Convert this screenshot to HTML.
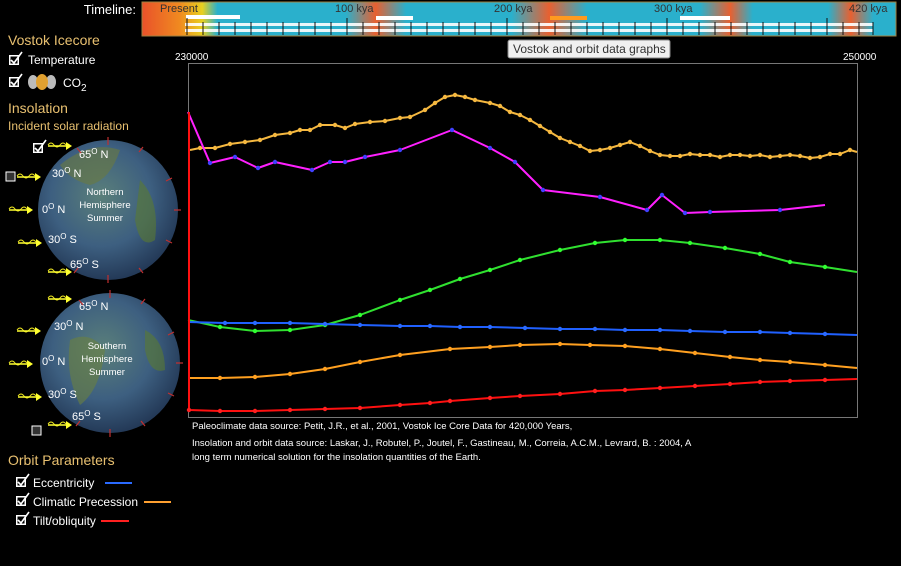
<!DOCTYPE html>
<html><head><meta charset="utf-8"><style>
html,body{margin:0;padding:0;background:#000;width:901px;height:566px;overflow:hidden}
svg{display:block;font-family:"Liberation Sans",Arial,sans-serif}
</style></head><body>
<svg width="901" height="566" viewBox="0 0 901 566">
<defs>
<linearGradient id="tl" x1="0" x2="1" y1="0" y2="0">
<stop offset="0" stop-color="#e9522a"/><stop offset="0.05" stop-color="#f08a20"/><stop offset="0.08" stop-color="#e8d020"/><stop offset="0.1" stop-color="#2ab0cc"/>
<stop offset="0.27" stop-color="#2ab0cc"/><stop offset="0.31" stop-color="#e86030"/><stop offset="0.35" stop-color="#2ab0cc"/>
<stop offset="0.49" stop-color="#2ab0cc"/><stop offset="0.54" stop-color="#e86030"/><stop offset="0.59" stop-color="#2ab0cc"/>
<stop offset="0.74" stop-color="#2ab0cc"/><stop offset="0.78" stop-color="#e86030"/><stop offset="0.81" stop-color="#2ab0cc"/>
<stop offset="0.91" stop-color="#2ab0cc"/><stop offset="0.94" stop-color="#e86030"/><stop offset="0.97" stop-color="#2ab0cc"/><stop offset="1" stop-color="#2ab0cc"/>
</linearGradient>
<radialGradient id="gl" cx="0.45" cy="0.4" r="0.6">
<stop offset="0" stop-color="#5a7f7a"/><stop offset="0.6" stop-color="#3d5f80"/><stop offset="1" stop-color="#243a58"/>
</radialGradient>
<marker id="dy" markerUnits="userSpaceOnUse" markerWidth="6" markerHeight="6" refX="3" refY="3"><circle cx="3" cy="3" r="2.2" fill="#f5b840"/></marker>
<marker id="dm" markerUnits="userSpaceOnUse" markerWidth="6" markerHeight="6" refX="3" refY="3"><circle cx="3" cy="3" r="2.2" fill="#4040ff"/></marker>
<marker id="dg" markerUnits="userSpaceOnUse" markerWidth="6" markerHeight="6" refX="3" refY="3"><circle cx="3" cy="3" r="2.2" fill="#30ff30"/></marker>
<marker id="db" markerUnits="userSpaceOnUse" markerWidth="6" markerHeight="6" refX="3" refY="3"><circle cx="3" cy="3" r="2.2" fill="#2a6aff"/></marker>
<marker id="do" markerUnits="userSpaceOnUse" markerWidth="6" markerHeight="6" refX="3" refY="3"><circle cx="3" cy="3" r="2.2" fill="#ffa020"/></marker>
<marker id="dr" markerUnits="userSpaceOnUse" markerWidth="6" markerHeight="6" refX="3" refY="3"><circle cx="3" cy="3" r="2.2" fill="#ff2020"/></marker>
<g id="arr"><path d="M0 0 Q3 -4 6 0 T12 0 T18 0" stroke="#e8e020" fill="none" stroke-width="1"/><path d="M0 1h20" stroke="#ffff30" stroke-width="1.6"/><path d="M18 -3l6 4-6 4z" fill="#ffff30"/></g>
<g id="cb"><rect x="0" y="2" width="10" height="10" fill="#fff"/><rect x="1.5" y="3.5" width="7" height="7" fill="#000"/><path d="M2 7l3 3 8-11" stroke="#fff" stroke-width="1.6" fill="none"/></g>
</defs>

<text x="136" y="14" fill="#fff" font-size="13" text-anchor="end">Timeline:</text>
<rect x="142" y="2" width="754" height="34" fill="url(#tl)" stroke="#a08040"/>
<text x="160" y="12" font-size="11" fill="#333">Present</text>
<text x="335" y="12" font-size="11" fill="#333">100 kya</text>
<text x="494" y="12" font-size="11" fill="#333">200 kya</text>
<text x="654" y="12" font-size="11" fill="#333">300 kya</text>
<text x="849" y="12" font-size="11" fill="#333">420 kya</text>
<rect x="186" y="15" width="54" height="4" fill="#fff"/>
<rect x="376" y="16" width="37" height="4" fill="#fff"/>
<rect x="550" y="16" width="37" height="4" fill="#ff9a20"/>
<rect x="680" y="16" width="50" height="4" fill="#fff"/>
<rect x="185" y="23" width="688" height="3" fill="#fff" opacity=".9"/>
<rect x="185" y="29" width="688" height="3" fill="#fff" opacity=".9"/>
<g stroke="#111" stroke-width="1">
<path d="M187 18v17M203 22v13M219 22v13M235 22v13M251 22v13M267 22v13M283 22v13M299 22v13M315 22v13M331 22v13M347 18v17M363 22v13M379 22v13M395 22v13M411 22v13M427 22v13M443 22v13M459 22v13M475 22v13M491 22v13M507 18v17M523 22v13M539 22v13M555 22v13M571 22v13M587 22v13M603 22v13M619 22v13M635 22v13M651 22v13M667 18v17M683 22v13M699 22v13M715 22v13M731 22v13M747 22v13M763 22v13M779 22v13M795 22v13M811 22v13M827 18v17M843 22v13M859 22v13M873 22v13"/>
</g>
<rect x="508" y="40" width="162" height="18" rx="2" fill="#f0f0f0" stroke="#888"/>
<text x="513" y="53" font-size="12" fill="#333">Vostok and orbit data graphs</text>

<text x="8" y="45" font-size="14" fill="#e8c070">Vostok Icecore</text>
<use href="#cb" x="9" y="53"/><text x="28" y="64" font-size="12" fill="#fff">Temperature</text>
<use href="#cb" x="9" y="75"/>
<ellipse cx="33" cy="82" rx="5" ry="7" fill="#bbb"/><ellipse cx="51" cy="82" rx="5" ry="7" fill="#bbb"/><ellipse cx="42" cy="82" rx="6" ry="8" fill="#e0a030"/>
<text x="63" y="87" font-size="12" fill="#fff">CO<tspan font-size="10" dy="4">2</tspan></text>
<text x="8" y="113" font-size="14" fill="#e8c070">Insolation</text>
<text x="8" y="130" font-size="12" fill="#e8c070">Incident solar radiation</text>

<circle cx="108" cy="210" r="70" fill="url(#gl)"/>
<path d="M60 165q30-25 60-15q-10 30-30 35q-20-5-30-20z" fill="#6a7a40" opacity=".6"/>
<path d="M140 180q20 20 15 60q-15 10-20-20z" fill="#5a7a30" opacity=".6"/>
<circle cx="110" cy="363" r="70" fill="url(#gl)"/>
<path d="M70 340q20-10 35 10q-5 40-25 55q-15-30-10-65z" fill="#6a8040" opacity=".6"/>
<path d="M145 330q20 10 20 40q-15 5-20-20z" fill="#5a7a30" opacity=".6"/>
<g fill="#fff" font-size="11">
<text x="79" y="158">65<tspan font-size="8" dy="-4">O</tspan><tspan dy="4"> N</tspan></text>
<text x="52" y="177">30<tspan font-size="8" dy="-4">O</tspan><tspan dy="4"> N</tspan></text>
<text x="42" y="213">0<tspan font-size="8" dy="-4">O</tspan><tspan dy="4"> N</tspan></text>
<text x="48" y="243">30<tspan font-size="8" dy="-4">O</tspan><tspan dy="4"> S</tspan></text>
<text x="70" y="268">65<tspan font-size="8" dy="-4">O</tspan><tspan dy="4"> S</tspan></text>
<text x="79" y="310">65<tspan font-size="8" dy="-4">O</tspan><tspan dy="4"> N</tspan></text>
<text x="54" y="330">30<tspan font-size="8" dy="-4">O</tspan><tspan dy="4"> N</tspan></text>
<text x="42" y="365">0<tspan font-size="8" dy="-4">O</tspan><tspan dy="4"> N</tspan></text>
<text x="48" y="398">30<tspan font-size="8" dy="-4">O</tspan><tspan dy="4"> S</tspan></text>
<text x="72" y="420">65<tspan font-size="8" dy="-4">O</tspan><tspan dy="4"> S</tspan></text>
</g>
<g fill="#fff" font-size="9.5" text-anchor="middle">
<text x="105" y="195">Northern</text><text x="105" y="208">Hemisphere</text><text x="105" y="221">Summer</text>
<text x="107" y="349">Southern</text><text x="107" y="362">Hemisphere</text><text x="107" y="375">Summer</text>
</g>
<use href="#arr" x="48" y="145"/><use href="#arr" x="17" y="176"/><use href="#arr" x="9" y="209"/><use href="#arr" x="18" y="242"/><use href="#arr" x="48" y="271"/>
<use href="#arr" x="48" y="298"/><use href="#arr" x="17" y="330"/><use href="#arr" x="9" y="363"/><use href="#arr" x="18" y="396"/><use href="#arr" x="48" y="424"/>
<use href="#cb" x="33" y="141"/>
<rect x="6" y="172" width="9" height="9" fill="#333" stroke="#fff"/>
<rect x="32" y="426" width="9" height="9" fill="#333" stroke="#fff"/>
<g stroke="#c03030" stroke-width="1.2">
<path d="M108 137v8M143 147l-4 5M172 178l-6 3M181 210h-7M172 243l-6-3M143 273l-4-5M108 283v-8M74 273l4-5M77 148l4 5"/>
<path d="M110 290v8M145 299l-4 5M174 332l-6 3M183 363h-7M174 396l-6-3M145 426l-4-5M110 437v-8M76 426l4-5M79 300l4 5"/>
</g>

<text x="8" y="465" font-size="14" fill="#e8c070">Orbit Parameters</text>
<use href="#cb" x="16" y="475"/><text x="33" y="487" font-size="12" fill="#fff">Eccentricity</text><path d="M105 483h27" stroke="#2a6aff" stroke-width="2"/>
<use href="#cb" x="16" y="494"/><text x="33" y="506" font-size="12" fill="#fff" textLength="105">Climatic Precession</text><path d="M144 502h27" stroke="#ffa030" stroke-width="2"/>
<use href="#cb" x="16" y="513"/><text x="33" y="525" font-size="12" fill="#fff">Tilt/obliquity</text><path d="M101 521h28" stroke="#ff2020" stroke-width="2"/>

<text x="175" y="60" font-size="10" fill="#fff">230000</text>
<text x="843" y="60" font-size="10" fill="#fff">250000</text>
<rect x="188.5" y="63.5" width="669" height="354" fill="none" stroke="#777"/>
<g fill="none" stroke-width="2" stroke-linejoin="round">
<polyline stroke="#f5b840" marker-mid="url(#dy)" points="190,150 200,148 215,148 230,144 245,142 260,140 275,135 290,133 300,130 310,130 320,125 335,125 345,128 355,124 370,122 385,121 400,118 410,117 425,110 435,103 445,97 455,95 465,97 475,100 490,103 500,106 510,112 520,115 530,120 540,126 550,132 560,138 570,142 580,146 590,151 600,150 610,148 620,145 630,142 640,146 650,151 660,155 670,156 680,156 690,154 700,155 710,155 720,157 730,155 740,155 750,156 760,155 770,157 780,156 790,155 800,156 810,158 820,157 830,154 840,154 850,150 857,152"/>
<polyline stroke="#ff20ff" marker-mid="url(#dm)" points="188,112 210,163 235,157 258,168 275,162 312,170 330,162 345,162 365,157 400,150 452,130 490,148 515,162 543,190 600,197 647,210 662,195 685,213 710,212 780,210 825,205"/>
<polyline stroke="#30e030" marker-mid="url(#dg)" points="188,320 220,327 255,331 290,330 325,325 360,315 400,300 430,290 460,279 490,270 520,260 560,250 595,243 625,240 660,240 690,243 725,248 760,254 790,262 825,267 857,272"/>
<polyline stroke="#2060ff" marker-mid="url(#db)" points="188,322 225,323 255,323 290,323 325,324 360,325 400,326 430,326 460,327 490,327 525,328 560,329 595,329 625,330 660,330 690,331 725,332 760,332 790,333 825,334 857,335"/>
<polyline stroke="#ffa020" marker-mid="url(#do)" points="188,378 220,378 255,377 290,374 325,369 360,362 400,355 450,349 490,347 520,345 560,344 590,345 625,346 660,349 695,353 730,357 760,360 790,362 825,365 857,368"/>
<polyline stroke="#ff1010" marker-mid="url(#dr)" points="189,112 189,410 220,411 255,411 290,410 325,409 360,408 400,405 430,403 450,401 490,398 520,396 560,394 595,391 625,390 660,388 695,386 730,384 760,382 790,381 825,380 857,379"/>
</g>
<g fill="#fff" font-size="9.5">
<text x="192" y="429">Paleoclimate data source: Petit, J.R., et al., 2001, Vostok Ice Core Data for 420,000 Years,</text>
<text x="192" y="446">Insolation and orbit data source: Laskar, J., Robutel, P., Joutel, F., Gastineau, M., Correia, A.C.M., Levrard, B. : 2004, A</text>
<text x="192" y="460">long term numerical solution for the insolation quantities of the Earth.</text>
</g>
</svg>
</body></html>
